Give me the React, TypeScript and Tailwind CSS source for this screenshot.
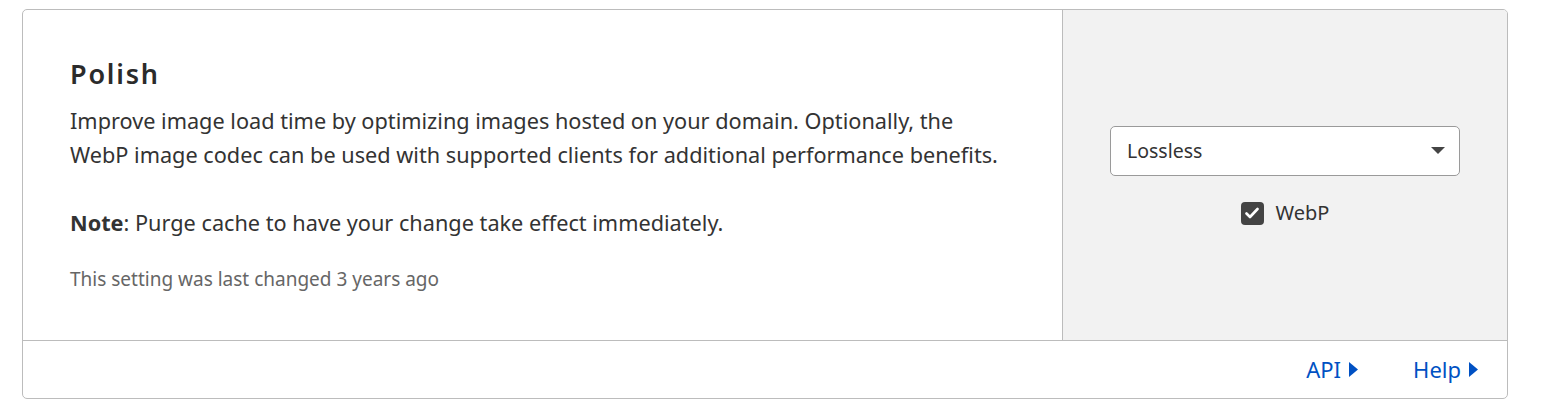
export default function App() {
  return (
    <div className="min-h-screen bg-white pl-[22px] pr-[36px] pt-[9px] font-['Noto_Sans',sans-serif]">
      <section className="overflow-hidden rounded-[5px] border border-[#bcbcbc] bg-white text-[#333]">
        <div className="flex border-b border-[#bcbcbc]">
          <div className="flex h-[330px] w-[1040px] flex-col border-r border-[#bcbcbc] pl-[47px] pr-[52px] pt-[48px]">
            <h2 className="text-[27px] font-semibold leading-[32px] tracking-[1.8px] text-[#2b2b2b]">Polish</h2>
            <p className="mt-[14px] text-[21.7px] leading-[34px] text-[#333]">
              Improve image load time by optimizing images hosted on your domain. Optionally, the WebP image codec can be used with supported clients for additional performance benefits.
            </p>
            <p className="mt-[34px] text-[21.7px] leading-[34px] text-[#333]">
              <span className="font-bold">Note</span>: Purge cache to have your change take effect immediately.
            </p>
            <p className="mt-[27px] text-[19px] leading-[24px] text-[#666]">This setting was last changed 3 years ago</p>
          </div>
          <div className="flex flex-1 flex-col items-center justify-center bg-[#f2f2f2] pt-[4px]">
            <div className="flex h-[50px] w-[350px] items-center justify-between rounded-[5px] border border-[#9a9a9a] bg-white pl-4 pr-[14px]">
              <span className="text-[19.5px] text-[#333]">Lossless</span>
              <svg width="14" height="8" viewBox="0 0 14 8">
                <path d="M0 0h14L7 7z" fill="#444" />
              </svg>
            </div>
            <label className="mt-[22px] flex items-center gap-[12px]">
              <span className="flex h-[23px] w-[23px] items-center justify-center rounded-[4px] bg-[#444]">
                <svg width="14" height="12" viewBox="0 0 14 12">
                  <path d="M1.5 6.5l3.5 3.5L12.5 2" fill="none" stroke="white" strokeWidth="2.6" strokeLinecap="round" strokeLinejoin="round" />
                </svg>
              </span>
              <span className="text-[20px] text-[#333]">WebP</span>
            </label>
          </div>
        </div>
        <div className="flex h-[57px] items-center justify-end gap-[55px] pr-[29px] text-[22px] text-[#0051c3]">
          <a className="flex items-center gap-[8px]" href="#">
            API
            <svg width="9" height="15" viewBox="0 0 9 15">
              <path d="M0 0l9 7.5L0 15z" fill="#0051c3" />
            </svg>
          </a>
          <a className="flex items-center gap-[8px]" href="#">
            Help
            <svg width="9" height="15" viewBox="0 0 9 15">
              <path d="M0 0l9 7.5L0 15z" fill="#0051c3" />
            </svg>
          </a>
        </div>
      </section>
    </div>
  );
}
